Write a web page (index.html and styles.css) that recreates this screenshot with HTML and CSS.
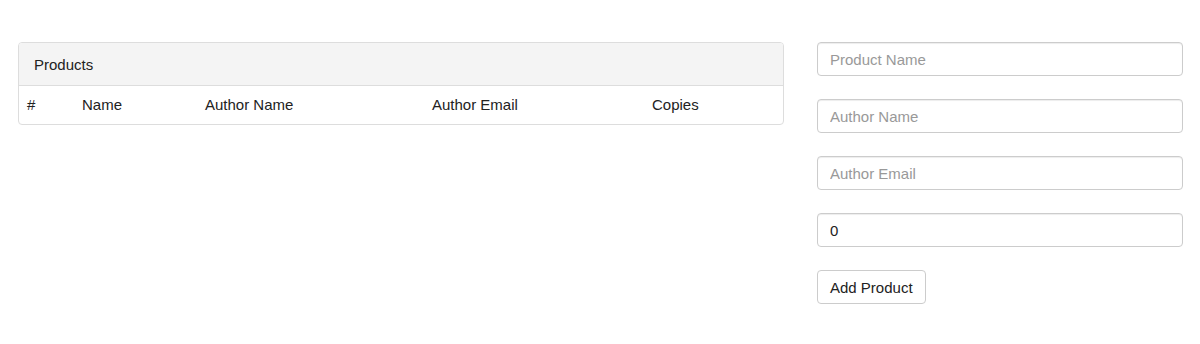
FILE: index.html
```html
<!DOCTYPE html>
<html lang="en">
<head>
  <meta charset="UTF-8">
  <title>Products</title>
  <link rel="stylesheet" href="styles.css">
</head>
<body>

<div class="layout">
  <div class="panel">
    <div class="panel-heading">Products</div>
    <table class="table">
      <thead>
        <tr>
          <th class="col-id">#</th>
          <th class="col-name">Name</th>
          <th class="col-author">Author Name</th>
          <th class="col-email">Author Email</th>
          <th>Copies</th>
        </tr>
      </thead>
      <tbody></tbody>
    </table>
  </div>

  <form class="product-form">
    <input type="text" class="form-control" placeholder="Product Name">
    <input type="text" class="form-control" placeholder="Author Name">
    <input type="text" class="form-control" placeholder="Author Email">
    <input type="number" class="form-control" value="0">
    <div><button type="button" class="btn">Add Product</button></div>
  </form>
</div>

</body>
</html>
```

FILE: styles.css
```css
/* General Styles */
body {
  margin: 0;
  font-family: "Liberation Sans", Arial, sans-serif;
  font-size: 15px;
  color: #222;
  background: #fff;
}

.layout {
  display: grid;
  grid-template-columns: 766px 366px;
  column-gap: 33px;
  padding: 42px 17px 0 18px;
  align-items: start;
}

/* Panel */
.panel {
  border: 1px solid #ddd;
  border-radius: 4px;
  overflow: hidden;
}

.panel-heading {
  background: #f4f4f4;
  border-bottom: 1px solid #ddd;
  padding: 11px 15px 10px;
  line-height: 21px;
}

.table {
  width: 100%;
  border-collapse: collapse;
}

.table th {
  text-align: left;
  font-weight: normal;
  padding: 8px 8px 9px 8px;
  line-height: 21px;
}

.col-id { width: 39px; }
.col-name { width: 107px; }
.col-author { width: 211px; }
.col-email { width: 204px; }

/* Form */
.product-form {
  display: flex;
  flex-direction: column;
  gap: 23px;
}

.form-control {
  box-sizing: border-box;
  height: 34px;
  width: 100%;
  padding: 6px 12px;
  font-family: inherit;
  font-size: 15px;
  color: #222;
  border: 1px solid #ccc;
  border-radius: 4px;
  box-shadow: inset 0 1px 1px rgba(0, 0, 0, 0.075);
  outline: none;
  margin: 0;
}

.form-control::placeholder {
  color: #999;
}

.form-control::-webkit-inner-spin-button {
  -webkit-appearance: none;
}

.btn {
  box-sizing: border-box;
  height: 34px;
  padding: 6px 12px;
  font-family: inherit;
  font-size: 15px;
  color: #222;
  background: #fff;
  border: 1px solid #ccc;
  border-radius: 4px;
  cursor: pointer;
}
```
